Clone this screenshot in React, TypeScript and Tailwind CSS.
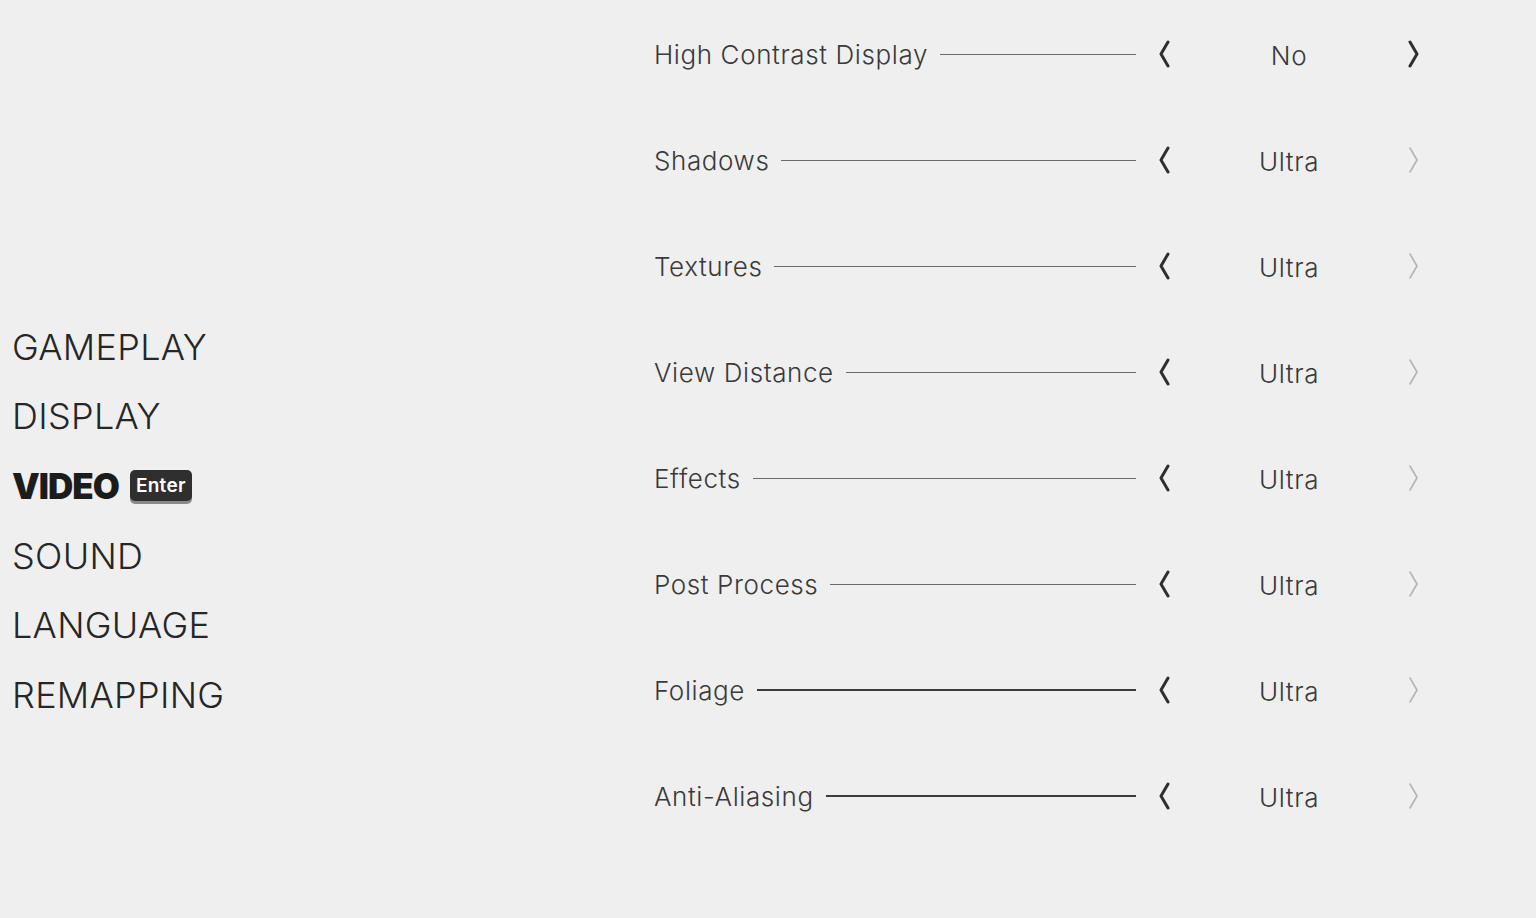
import React from "react";

type Row = { label: string; value: string; rightActive: boolean; heavy: boolean };

const rows: Row[] = [
  { label: "High Contrast Display", value: "No", rightActive: true, heavy: false },
  { label: "Shadows", value: "Ultra", rightActive: false, heavy: false },
  { label: "Textures", value: "Ultra", rightActive: false, heavy: false },
  { label: "View Distance", value: "Ultra", rightActive: false, heavy: false },
  { label: "Effects", value: "Ultra", rightActive: false, heavy: false },
  { label: "Post Process", value: "Ultra", rightActive: false, heavy: false },
  { label: "Foliage", value: "Ultra", rightActive: false, heavy: true },
  { label: "Anti-Aliasing", value: "Ultra", rightActive: false, heavy: true },
];

const nav = ["GAMEPLAY", "DISPLAY", "VIDEO", "SOUND", "LANGUAGE", "REMAPPING"];

function ChevronLeft() {
  return (
    <svg width="12" height="28" viewBox="0 0 12 28" className="shrink-0">
      <path d="M10 2 L3 14 L10 26" fill="none" stroke="#2e2e2e" strokeWidth="3" strokeLinecap="round" strokeLinejoin="round" />
    </svg>
  );
}

function ChevronRight({ active }: { active: boolean }) {
  return (
    <svg width="12" height="28" viewBox="0 0 12 28" className="shrink-0">
      <path
        d="M2 2 L9 14 L2 26"
        fill="none"
        stroke={active ? "#2e2e2e" : "#b4b4b4"}
        strokeWidth={active ? 3 : 1.6}
        strokeLinecap="round"
        strokeLinejoin="round"
      />
    </svg>
  );
}

export default function App() {
  return (
    <div
      className="w-[1536px] h-[918px] overflow-hidden bg-[#efefef] flex text-[#2b2b2b]"
      style={{ fontFamily: "Inter, 'Noto Sans', sans-serif" }}
    >
      <div className="w-[654px] shrink-0 pl-[12px] pt-[312px] flex flex-col">
        {nav.map((n) =>
          n === "VIDEO" ? (
            <div key={n} className="h-[69.6px] flex items-center gap-[11px]">
              <span className="text-[35px] font-black tracking-[-1px] text-[#1c1c1c]">VIDEO</span>
              <span className="rounded-[5px] bg-[#2f2f2f] px-[6px] h-[31px] flex items-center text-[19px] font-semibold tracking-[0.3px] text-white shadow-[0_3px_0_#8a8a8a]">
                Enter
              </span>
            </div>
          ) : (
            <div key={n} className="h-[69.6px] flex items-center text-[36px] font-light tracking-[0.3px] text-[#262626]">
              {n}
            </div>
          )
        )}
      </div>
      <div className="flex flex-col pt-[1px] w-[776px]">
        {rows.map((r) => (
          <div key={r.label} className="h-[106px] flex items-center">
            <div className="flex-1 flex items-center">
              <span className="text-[26px] font-light text-[#3a3a3a] tracking-[0.6px]">{r.label}</span>
              <div className={`flex-1 ml-[12px] ${r.heavy ? "h-[2px] bg-[#3c3c3c]" : "h-px bg-[#6a6a6a]"}`} />
            </div>
            <div className="w-[262px] ml-[22px] flex items-center mr-[10px]">
              <ChevronLeft />
              <span className="flex-1 text-center text-[26px] font-light text-[#3a3a3a] tracking-[0.6px] pt-[2px]">{r.value}</span>
              <ChevronRight active={r.rightActive} />
            </div>
          </div>
        ))}
      </div>
    </div>
  );
}
